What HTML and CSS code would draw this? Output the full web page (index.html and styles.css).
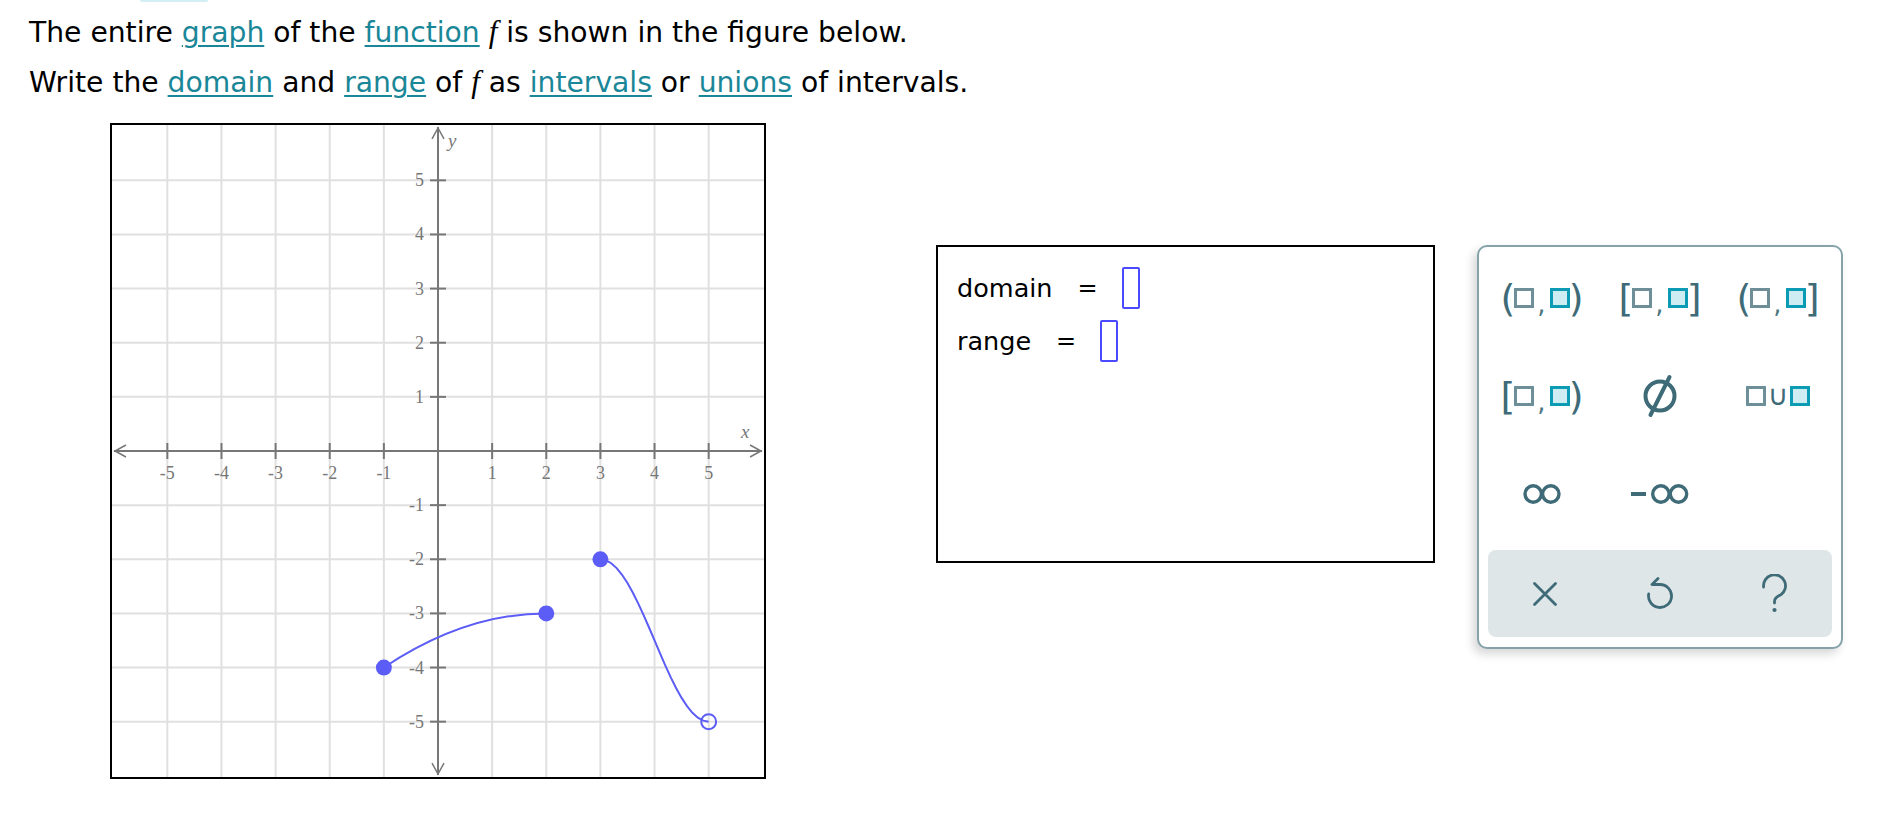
FILE: index.html
```html
<!DOCTYPE html>
<html lang="en">
<head>
<meta charset="utf-8">
<title>Domain and range</title>
<link rel="stylesheet" href="styles.css">
</head>
<body>
<div class="page">
  <div class="tab"></div>
  <div class="prompt">
    <p>The entire <a href="#">graph</a> of the <a href="#">function</a> <i class="fn">f</i> is shown in the figure below.</p>
    <p>Write the <a href="#">domain</a> and <a href="#">range</a> of <i class="fn">f</i> as <a href="#">intervals</a> or <a href="#">unions</a> of intervals.</p>
  </div>

  <div class="work">
    <div class="graph">
      <svg width="652" height="652" viewBox="0 0 654 654">
        <g class="grid">
          <line x1="55.5" y1="0" x2="55.5" y2="654"/>
          <line x1="109.8" y1="0" x2="109.8" y2="654"/>
          <line x1="164.1" y1="0" x2="164.1" y2="654"/>
          <line x1="218.4" y1="0" x2="218.4" y2="654"/>
          <line x1="272.7" y1="0" x2="272.7" y2="654"/>
          <line x1="381.3" y1="0" x2="381.3" y2="654"/>
          <line x1="435.6" y1="0" x2="435.6" y2="654"/>
          <line x1="489.9" y1="0" x2="489.9" y2="654"/>
          <line x1="544.2" y1="0" x2="544.2" y2="654"/>
          <line x1="598.5" y1="0" x2="598.5" y2="654"/>
          <line y1="55.5" x1="0" y2="55.5" x2="654"/>
          <line y1="109.8" x1="0" y2="109.8" x2="654"/>
          <line y1="164.1" x1="0" y2="164.1" x2="654"/>
          <line y1="218.4" x1="0" y2="218.4" x2="654"/>
          <line y1="272.7" x1="0" y2="272.7" x2="654"/>
          <line y1="381.3" x1="0" y2="381.3" x2="654"/>
          <line y1="435.6" x1="0" y2="435.6" x2="654"/>
          <line y1="489.9" x1="0" y2="489.9" x2="654"/>
          <line y1="544.2" x1="0" y2="544.2" x2="654"/>
          <line y1="598.5" x1="0" y2="598.5" x2="654"/>
        </g>
        <g class="axes">
          <line x1="2" y1="327" x2="652" y2="327"/>
          <line x1="327" y1="2" x2="327" y2="652"/>
          <line x1="55.5" y1="319" x2="55.5" y2="335"/>
          <line x1="109.8" y1="319" x2="109.8" y2="335"/>
          <line x1="164.1" y1="319" x2="164.1" y2="335"/>
          <line x1="218.4" y1="319" x2="218.4" y2="335"/>
          <line x1="272.7" y1="319" x2="272.7" y2="335"/>
          <line x1="381.3" y1="319" x2="381.3" y2="335"/>
          <line x1="435.6" y1="319" x2="435.6" y2="335"/>
          <line x1="489.9" y1="319" x2="489.9" y2="335"/>
          <line x1="544.2" y1="319" x2="544.2" y2="335"/>
          <line x1="598.5" y1="319" x2="598.5" y2="335"/>
          <line y1="55.5" x1="319" y2="55.5" x2="335"/>
          <line y1="109.8" x1="319" y2="109.8" x2="335"/>
          <line y1="164.1" x1="319" y2="164.1" x2="335"/>
          <line y1="218.4" x1="319" y2="218.4" x2="335"/>
          <line y1="272.7" x1="319" y2="272.7" x2="335"/>
          <line y1="381.3" x1="319" y2="381.3" x2="335"/>
          <line y1="435.6" x1="319" y2="435.6" x2="335"/>
          <line y1="489.9" x1="319" y2="489.9" x2="335"/>
          <line y1="544.2" x1="319" y2="544.2" x2="335"/>
          <line y1="598.5" x1="319" y2="598.5" x2="335"/>
        </g>
        <g class="arrows">
          <polyline points="14,321 3,327 14,333"/>
          <polyline points="640,321 651,327 640,333"/>
          <polyline points="321,14 327,3 333,14"/>
          <polyline points="321,640 327,651 333,640"/>
        </g>
        <g class="xlabels">
          <text x="55.5" y="355">-5</text>
          <text x="109.8" y="355">-4</text>
          <text x="164.1" y="355">-3</text>
          <text x="218.4" y="355">-2</text>
          <text x="272.7" y="355">-1</text>
          <text x="381.3" y="355">1</text>
          <text x="435.6" y="355">2</text>
          <text x="489.9" y="355">3</text>
          <text x="544.2" y="355">4</text>
          <text x="598.5" y="355">5</text>
        </g>
        <g class="ylabels">
          <text x="313" y="61.5">5</text>
          <text x="313" y="115.8">4</text>
          <text x="313" y="170.1">3</text>
          <text x="313" y="224.4">2</text>
          <text x="313" y="278.7">1</text>
          <text x="313" y="387.3">-1</text>
          <text x="313" y="441.6">-2</text>
          <text x="313" y="495.9">-3</text>
          <text x="313" y="550.2">-4</text>
          <text x="313" y="604.5">-5</text>
        </g>
        <text class="axisname" x="337" y="22">y</text>
        <text class="axisname" x="631" y="314">x</text>
        <g class="plot">
          <path d="M 272.7 544.2 Q 354.15 489.9 435.6 489.9"/>
          <polyline points="489.9,435.6 495.33,436.6 500.76,439.59 506.19,444.48 511.62,451.16 517.05,459.46 522.48,469.17 527.91,480.07 533.34,491.88 538.77,504.31 544.2,517.05 549.63,529.79 555.06,542.22 560.49,554.03 565.92,564.93 571.35,574.64 576.78,582.94 582.21,589.62 587.64,594.51 593.07,597.5 598.5,598.5"/>
        </g>
        <g class="dots">
          <circle cx="272.7" cy="544.2" r="8"/>
          <circle cx="435.6" cy="489.9" r="8"/>
          <circle cx="489.9" cy="435.6" r="8"/>
        </g>
        <circle class="open" cx="598.5" cy="598.5" r="7.5"/>
      </svg>
    </div>

    <div class="answer">
      <div class="row">
        <span class="lbl">domain</span><span class="eq">=</span><span class="slot"></span>
      </div>
      <div class="row">
        <span class="lbl">range</span><span class="eq">=</span><span class="slot"></span>
      </div>
    </div>

    <div class="keypad">
      <div class="keys">
        <div class="key"><span class="d o">(</span><span class="sq"></span><span class="cm">,</span><span class="sq b"></span><span class="d c">)</span></div>
        <div class="key"><span class="d o">[</span><span class="sq"></span><span class="cm">,</span><span class="sq b"></span><span class="d c">]</span></div>
        <div class="key"><span class="d o">(</span><span class="sq"></span><span class="cm">,</span><span class="sq b"></span><span class="d c">]</span></div>
        <div class="key"><span class="d o">[</span><span class="sq"></span><span class="cm">,</span><span class="sq b"></span><span class="d c">)</span></div>
        <div class="key" aria-label="empty set">
          <svg width="40" height="44" viewBox="0 0 40 44"><circle cx="20" cy="22" r="14.5" class="ico"/><line x1="10.5" y1="41" x2="29.5" y2="3" class="ico"/></svg>
        </div>
        <div class="key"><span class="sq"></span><span class="cup">∪</span><span class="sq b"></span></div>
        <div class="key" aria-label="infinity">
          <svg width="40" height="24" viewBox="0 0 40 24"><circle cx="11.2" cy="12" r="8.2" class="ico thin"/><circle cx="28.8" cy="12" r="8.2" class="ico thin"/></svg>
        </div>
        <div class="key" aria-label="negative infinity">
          <svg width="58" height="24" viewBox="0 0 58 24"><rect x="0" y="10" width="15" height="4" class="fillico"/><circle cx="29.9" cy="12" r="8.2" class="ico thin"/><circle cx="47.5" cy="12" r="8.2" class="ico thin"/></svg>
        </div>
        <div class="key"></div>
      </div>
      <div class="tools">
        <div class="tool" aria-label="clear">
          <svg width="26" height="26" viewBox="0 0 26 26"><path d="M2.5 2.5 L23.5 23.5 M23.5 2.5 L2.5 23.5" class="ico line"/></svg>
        </div>
        <div class="tool" aria-label="undo">
          <svg width="32" height="34" viewBox="0 0 32 34"><path d="M14 1.5 L8 7.5 L16 7.5 A11.5 11.5 0 1 1 4.7 17" class="ico line"/></svg>
        </div>
        <div class="tool" aria-label="help">
          <svg width="28" height="40" viewBox="0 0 28 40"><path d="M2.6 13 A11 11 0 1 1 19.8 20.8 Q13.5 23.5 13.5 27.5 L13.5 29" class="ico line"/><circle cx="13.5" cy="36" r="2.1" class="fillico"/></svg>
        </div>
      </div>
    </div>
  </div>
</div>
</body>
</html>
```

FILE: styles.css
```css
html, body {
  margin: 0;
  padding: 0;
  background: #fff;
}

body {
  font-family: "DejaVu Sans", Verdana, sans-serif;
  color: #000;
}

.page {
  padding-left: 29px;
}

.tab {
  width: 68px;
  height: 2px;
  margin-left: 111px;
  background: #d3eef4;
  border-radius: 0 0 4px 4px;
}

.prompt {
  padding-top: 5px;
  font-size: 28.2px;
}

.prompt p {
  margin: 0;
  line-height: 49px;
  white-space: nowrap;
}

.prompt a {
  color: #1a8798;
  text-decoration: underline;
  text-decoration-thickness: 2px;
  text-underline-offset: 3px;
}

.fn {
  font-family: "Liberation Serif", "Times New Roman", serif;
  font-style: italic;
  font-size: 31px;
}

.work {
  display: flex;
  align-items: flex-start;
  margin-top: 16px;
}

.graph {
  margin-left: 81px;
  width: 652px;
  height: 652px;
  border: 2px solid #000;
  flex: none;
}

.graph svg {
  display: block;
}

.grid line {
  stroke: #e0e0e0;
  stroke-width: 2;
}

.axes line {
  stroke: #777;
  stroke-width: 2;
}

.arrows polyline {
  fill: none;
  stroke: #777;
  stroke-width: 1.5;
}

.xlabels text,
.ylabels text {
  font-family: "Liberation Serif", "Times New Roman", serif;
  font-size: 18px;
  fill: #777;
}

.xlabels text {
  text-anchor: middle;
}

.ylabels text {
  text-anchor: end;
}

.axisname {
  font-family: "Liberation Serif", "Times New Roman", serif;
  font-style: italic;
  font-size: 19px;
  fill: #777;
}

.plot path,
.plot polyline {
  fill: none;
  stroke: #5c5cf6;
  stroke-width: 2;
}

.dots circle {
  fill: #5c5cf6;
}

.open {
  fill: none;
  stroke: #5c5cf6;
  stroke-width: 2;
}

.answer {
  margin-left: 170px;
  margin-top: 122px;
  width: 499px;
  height: 318px;
  box-sizing: border-box;
  border: 2px solid #000;
  padding: 14px 0 0 19px;
  flex: none;
}

.row {
  display: flex;
  align-items: center;
  height: 53px;
  font-size: 25.5px;
}

.eq {
  width: 22px;
  margin: 0 23px 0 24px;
  text-align: center;
  font-size: 24px;
}

.slot {
  width: 18px;
  height: 42px;
  box-sizing: border-box;
  border: 2px solid #4a4aff;
  border-radius: 2px;
}

.keypad {
  margin-left: 42px;
  margin-top: 122px;
  width: 366px;
  height: 404px;
  box-sizing: border-box;
  border: 2px solid #86a3aa;
  border-radius: 10px;
  padding: 2px 4px 9px;
  background: #fff;
  box-shadow: -4px 5px 10px rgba(0, 0, 0, 0.16);
  flex: none;
}

.keys {
  display: grid;
  grid-template-columns: repeat(3, 118px);
  grid-auto-rows: 98px;
}

.key {
  display: flex;
  align-items: center;
  justify-content: center;
  color: #3e6b77;
}

.d {
  font-size: 38px;
  line-height: 1;
  color: #3e6b77;
}

.d.o {
  margin-right: -1px;
}

.d.c {
  margin-left: -1px;
}

.sq {
  width: 20px;
  height: 20px;
  box-sizing: border-box;
  border: 3px solid #6e8f98;
  background: #fff;
}

.sq.b {
  border-color: #0b9bb5;
  background: #cdedf3;
}

.cm {
  font-size: 26px;
  line-height: 1;
  color: #4d7781;
  margin: 12px 4px 0 3px;
}

.cup {
  font-size: 28px;
  line-height: 1;
  color: #3e6b77;
  margin: 0 2px;
}

.ico {
  fill: none;
  stroke: #3e6b77;
  stroke-width: 4;
  stroke-linecap: round;
}

.ico.thin {
  stroke-width: 3.4;
}

.ico.line {
  stroke-width: 2.8;
  stroke-linejoin: round;
}

.fillico {
  fill: #3e6b77;
}

.tools {
  margin: 7px 5px 0;
  height: 87px;
  background: #dfe6e8;
  border-radius: 8px;
  display: grid;
  grid-template-columns: repeat(3, 1fr);
  align-items: center;
  justify-items: center;
}

.tool svg {
  display: block;
}
```
